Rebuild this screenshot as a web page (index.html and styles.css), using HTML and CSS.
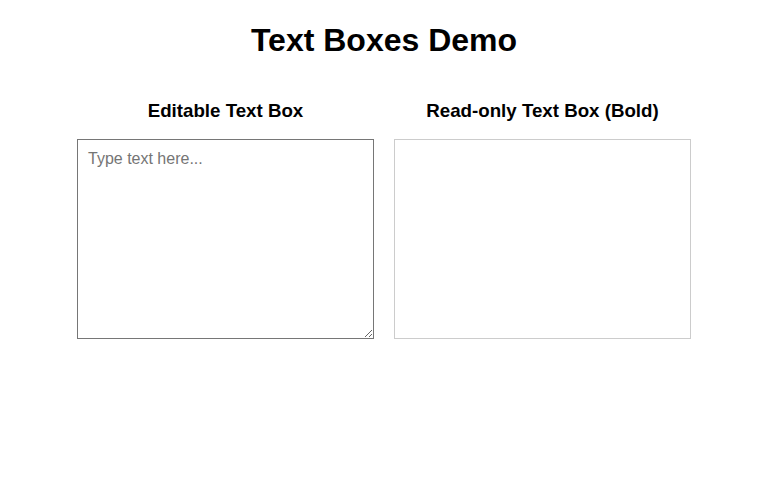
FILE: index.html
```html
<!DOCTYPE html>
<html>
<head>
<meta charset="utf-8">
<link rel="stylesheet" href="styles.css">
</head>
<body>
<h1 class="title">Text Boxes Demo</h1>
<div class="columns">
  <div class="col">
    <h2 class="label">Editable Text Box</h2>
    <textarea class="box editable" placeholder="Type text here..."></textarea>
  </div>
  <div class="col">
    <h2 class="label">Read-only Text Box (Bold)</h2>
    <div class="box readonly"></div>
  </div>
</div>
</body>
</html>
```
FILE: styles.css
```css
body {
  margin: 0;
  font-family: "Liberation Sans", Arial, sans-serif;
  background: #fff;
  color: #000;
}
.title {
  font-size: 32px;
  font-weight: bold;
  text-align: center;
  margin: 22px 0 0;
  line-height: 37px;
}
.columns {
  display: flex;
  justify-content: center;
  gap: 20px;
  margin-top: 41px;
}
.col {
  width: 297px;
  display: flex;
  flex-direction: column;
  align-items: center;
}
.label {
  font-size: 18.72px;
  font-weight: bold;
  margin: 0 0 17px;
  line-height: 22px;
}
.box {
  box-sizing: border-box;
  width: 297px;
  height: 200px;
  padding: 10px;
  font-family: "Liberation Sans", Arial, sans-serif;
  font-size: 16px;
  margin: 0;
}
.editable {
  border: 1px solid #767676;
  resize: both;
}
.editable::placeholder {
  color: #757575;
}
.readonly {
  border: 1px solid #ccc;
  font-weight: bold;
}
```
